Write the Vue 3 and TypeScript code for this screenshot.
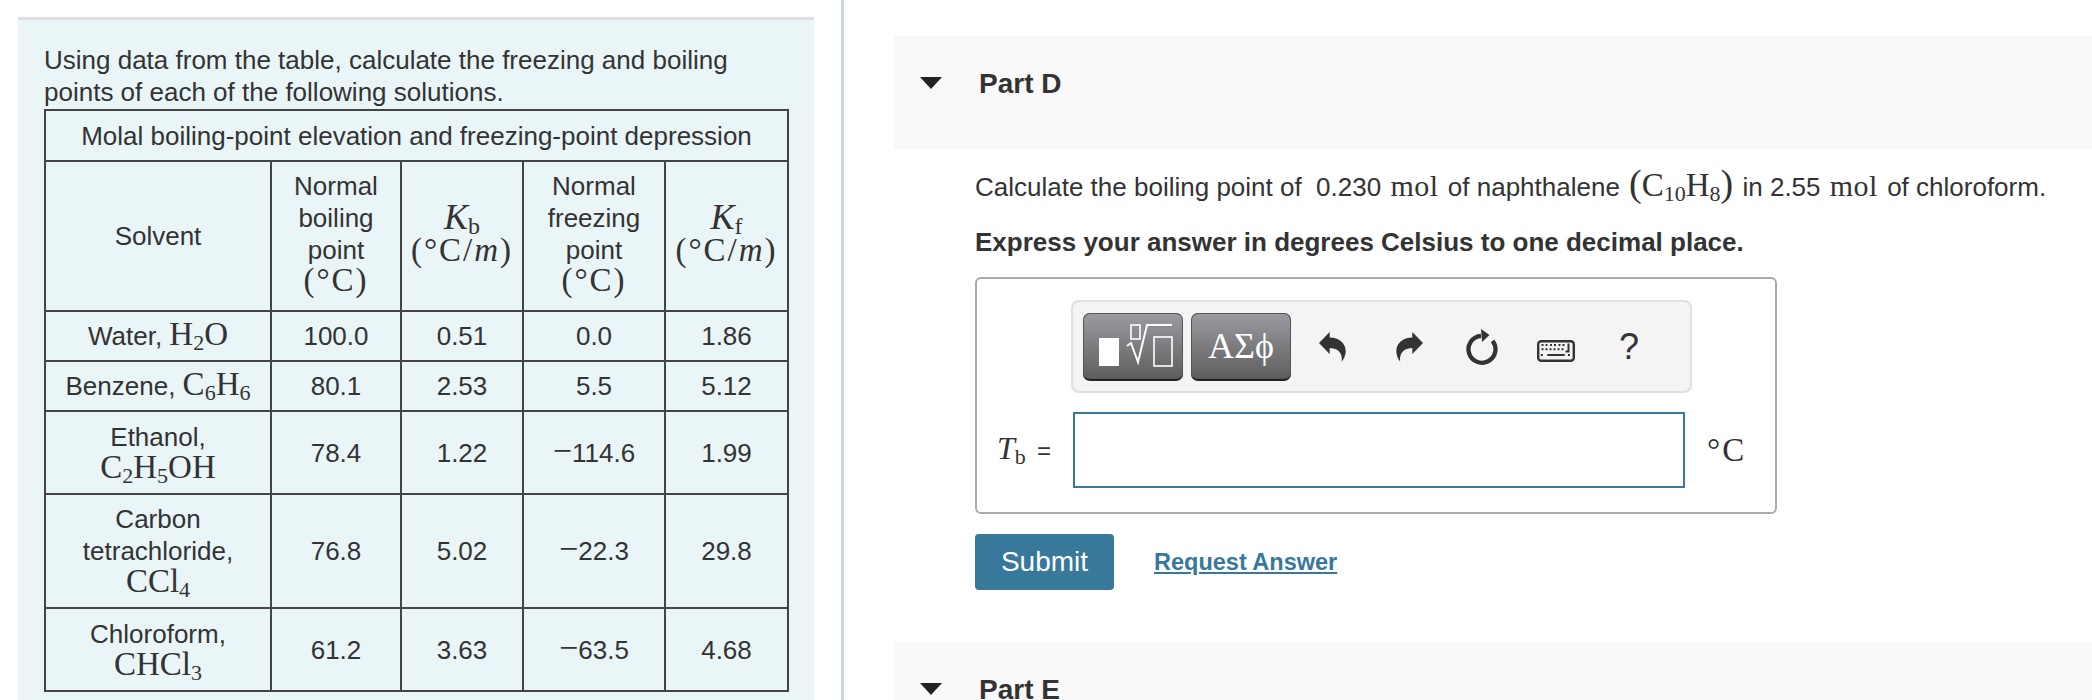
<script setup lang="ts">
interface Row { solvent: string; bp: string; kb: string; fp: string; kf: string; h: number }
const minus = '<span class="minus">−</span>'
const rows: Row[] = [
  { solvent: 'Water, <span class="m">H<sub>2</sub>O</span>', bp: '100.0', kb: '0.51', fp: '0.0', kf: '1.86', h: 50 },
  { solvent: 'Benzene, <span class="m">C<sub>6</sub>H<sub>6</sub></span>', bp: '80.1', kb: '2.53', fp: '5.5', kf: '5.12', h: 50 },
  { solvent: 'Ethanol,<br><span class="m">C<sub>2</sub>H<sub>5</sub>OH</span>', bp: '78.4', kb: '1.22', fp: minus + '114.6', kf: '1.99', h: 83 },
  { solvent: 'Carbon<br>tetrachloride,<br><span class="m">CCl<sub>4</sub></span>', bp: '76.8', kb: '5.02', fp: minus + '22.3', kf: '29.8', h: 114 },
  { solvent: 'Chloroform,<br><span class="m">CHCl<sub>3</sub></span>', bp: '61.2', kb: '3.63', fp: minus + '63.5', kf: '4.68', h: 83 },
]
</script>

<template>
  <div class="page">
    <div class="left">
      <div class="panel">
        <p class="intro">Using data from the table, calculate the freezing and boiling points of each of the following solutions.</p>
        <table class="data">
          <colgroup>
            <col class="c1" /><col class="c2" /><col class="c3" /><col class="c4" /><col class="c5" />
          </colgroup>
          <thead>
            <tr class="r-title"><th colspan="5">Molal boiling-point elevation and freezing-point depression</th></tr>
            <tr class="r-head">
              <th>Solvent</th>
              <th class="stack">Normal<br />boiling<br />point<br /><span class="m wide">(°C)</span></th>
              <th><span class="m"><i class="kk">K</i><sub class="ksub">b</sub><br /><span class="wide">(°C/<i>m</i>)</span></span></th>
              <th class="stack">Normal<br />freezing<br />point<br /><span class="m wide">(°C)</span></th>
              <th><span class="m"><i class="kk">K</i><sub class="ksub">f</sub><br /><span class="wide">(°C/<i>m</i>)</span></span></th>
            </tr>
          </thead>
          <tbody>
            <tr v-for="r in rows" :key="r.bp" :style="{ height: r.h + 'px' }">
              <td v-html="r.solvent"></td>
              <td>{{ r.bp }}</td>
              <td>{{ r.kb }}</td>
              <td v-html="r.fp"></td>
              <td>{{ r.kf }}</td>
            </tr>
          </tbody>
        </table>
      </div>
    </div>

    <div class="right">
      <div class="part-head">
        <span class="tri"></span>
        <span class="part-title">Part D</span>
      </div>
      <div class="part-body">
        <p class="question">Calculate the boiling point of &nbsp;0.230 <span class="m mol">mol</span> of naphthalene <span class="m formula"><span class="paren">(</span>C<sub>10</sub>H<sub>8</sub><span class="paren">)</span></span> in 2.55 <span class="m mol">mol</span> of chloroform.</p>
        <p class="express">Express your answer in degrees Celsius to one decimal place.</p>
        <div class="answer">
          <div class="toolbar">
            <button class="tb-btn tb-first">
              <svg width="100" height="68" viewBox="0 0 100 68" fill="none" stroke="#fff" stroke-width="1.6">
                <rect x="16" y="26" width="20" height="28" fill="#fff" stroke="none" />
                <rect x="48" y="13" width="9" height="14" />
                <path d="M44 34l4-3 7 19 9-37h25" stroke-width="2" />
                <rect x="71" y="25" width="18" height="29" />
              </svg>
            </button>
            <button class="tb-btn tb-greek">ΑΣϕ</button>
            <svg class="ic ic-undo" width="27" height="30" viewBox="0 0 27 30"><path fill="#333" d="M0 11L10.700 0V5.500C20 5.500 27 11 26.700 20 26.500 24 24.500 27 22.700 30 23.500 24 22 16.500 10.700 16V22Z" /></svg>
            <svg class="ic ic-redo" width="27" height="30" viewBox="0 0 27 30"><path fill="#333" d="M27 11L16.300 0V5.500C7 5.500 0 11 .3 20 .5 24 2.500 27 4.300 30 3.500 24 5 16.500 16.300 16V22Z" /></svg>
            <svg class="ic ic-reset" width="33" height="36" viewBox="0 0 33 36"><path fill="none" stroke="#333" stroke-width="4.300" d="M26.500 11.800A13.500 13.500 0 1 1 15 6.800" /><path fill="#333" d="M15 0l8.500 6L16 13z" /></svg>
            <svg class="ic ic-keys" width="38" height="22" viewBox="0 0 38 22">
              <rect x="1.200" y="1.200" width="35.600" height="19.600" rx="3" fill="#f4f4f4" stroke="#333" stroke-width="2.400" />
              <path stroke="#333" stroke-width="2" fill="none" d="M4.500 5h2M8.500 5h2M13 5h2M17 5h2M21.500 5h2M25.500 5h2M4.500 9.300h2M8.500 9.300h2M12.500 9.300h2M16.500 9.300h2M20.500 9.300h2M24.500 9.300h2M31.500 3.500v8h-3M3.800 15h2M10.300 15h17.400M31 15h2" />
            </svg>
            <span class="help">?</span>
          </div>
          <div class="entry">
            <span class="label"><span class="m lab"><i>T</i><sub>b</sub></span> <span class="eq">=</span></span>
            <div class="field"></div>
            <span class="m unit">°C</span>
          </div>
        </div>
        <div class="actions">
          <button class="submit">Submit</button>
          <a class="req">Request Answer</a>
        </div>
      </div>
      <div class="part-head part-e">
        <span class="tri"></span>
        <span class="part-title">Part E</span>
      </div>
    </div>
  </div>
</template>

<style scoped>
.page {
  display: flex;
  height: 700px;
  overflow: hidden;
  font-family: "Liberation Sans", Arial, sans-serif;
  font-size: 26px;
  line-height: 32px;
  color: #333;
}
.left {
  width: 844px;
  box-sizing: border-box;
  flex: none;
  border-right: 3px solid #c9d6e6;
  padding-left: 18px;
}
.panel {
  width: 796px;
  height: 683px;
  margin-top: 17px;
  box-sizing: border-box;
  background: #e9f5f7;
  border-top: 3px solid #dddddd;
  padding: 24px 0 0 26px;
}
.intro {
  margin: 0;
  width: 740px;
}
.data {
  border-collapse: collapse;
  table-layout: fixed;
  width: 743px;
  margin-top: 1px;
  text-align: center;
}
.c1 { width: 226px; }
.c2 { width: 130px; }
.c3 { width: 122px; }
.c4 { width: 142px; }
.c5 { width: 123px; }
.data th,
.data td {
  border: 2px solid #444;
  padding: 0;
  font-weight: 400;
}
.data th.stack { padding-bottom: 4px; }
.r-title { height: 51px; }
.r-head { height: 150px; }
.m, :deep(.m) {
  font-family: "Liberation Serif", "Times New Roman", serif;
  font-size: 33px;
  line-height: 0;
}
.m sub, :deep(.m sub) {
  font-size: 22px;
  line-height: 0;
  vertical-align: -5px;
}
:deep(.minus) {
  font-family: "Liberation Serif", serif;
  font-size: 34px;
  line-height: 0;
}
.kk { font-size: 36px; }
.m sub.ksub { font-size: 24px; }
.wide { letter-spacing: 2px; }
.mol { font-size: 30px; letter-spacing: 0.5px; margin: 0 2px; }
.formula { margin: 0 2px; }
.right {
  margin-left: 50px;
  flex: 1;
  min-width: 0;
  padding-top: 36px;
}
.part-head {
  display: flex;
  height: 113px;
  box-sizing: border-box;
  background: #f9f9f9;
  padding: 32px 0 0 26px;
}
.tri {
  width: 0;
  height: 0;
  border-left: 11px solid transparent;
  border-right: 11px solid transparent;
  border-top: 12px solid #222;
  margin-top: 9px;
  margin-right: 37px;
}
.part-title { font-weight: 700; font-size: 28px; }
.part-body { padding-left: 81px; }
.question { margin: 22px 0 0; white-space: nowrap; }
.paren { font-size: 38px; line-height: 0; }
.express { margin: 23px 0 0; font-weight: 700; }
.answer {
  width: 802px;
  box-sizing: border-box;
  margin-top: 19px;
  border: 2px solid #aaa;
  border-radius: 6px;
  padding: 21px 0 24px;
}
.toolbar {
  display: flex;
  align-items: center;
  width: 621px;
  height: 93px;
  box-sizing: border-box;
  margin-left: 94px;
  background: #f4f4f4;
  border: 2px solid #e0e0e0;
  border-radius: 8px;
  padding-left: 10px;
}
.tb-btn {
  width: 100px;
  height: 68px;
  padding: 0;
  border: none;
  border-bottom: 2px solid #222;
  border-radius: 7px;
  background: linear-gradient(#9b9ba2, #5e5e5e);
  box-shadow: inset 0 0 0 1px #555;
  color: #fff;
  font-family: "Liberation Serif", serif;
  font-size: 36px;
  display: flex;
  align-items: center;
  justify-content: center;
}
.tb-greek { margin-left: 8px; }
.ic { flex: none; }
.ic-undo { margin-left: 28px; }
.ic-redo { margin-left: 50px; }
.ic-reset { margin-left: 43px; }
.ic-keys { margin: 9px 0 0 38px; }
.help { margin-left: 44px; font-size: 36px; }
.entry {
  display: flex;
  align-items: center;
  margin-top: 19px;
  padding-left: 20px;
}
.label {
  width: 76px;
  flex: none;
  white-space: nowrap;
}
.lab { font-size: 32px; }
.eq { font-size: 24px; margin-left: 4px; }
.field {
  width: 612px;
  height: 76px;
  box-sizing: border-box;
  border: 2px solid #37789b;
  background: #fff;
}
.unit { margin-left: 22px; font-size: 33px; letter-spacing: 2px; }
.actions {
  display: flex;
  align-items: center;
  margin-top: 20px;
}
.submit {
  width: 139px;
  height: 56px;
  border: none;
  border-radius: 4px;
  background: #37789b;
  color: #fff;
  font: 400 28px/32px "Liberation Sans", Arial, sans-serif;
  padding: 0;
}
.req {
  margin-left: 40px;
  color: #37789b;
  font-weight: 700;
  text-decoration: underline;
  font-size: 23.5px;
}
.part-e { margin-top: 52px; }
</style>

<style>
html, body { margin: 0; overflow: hidden; background: #fff; }
</style>
